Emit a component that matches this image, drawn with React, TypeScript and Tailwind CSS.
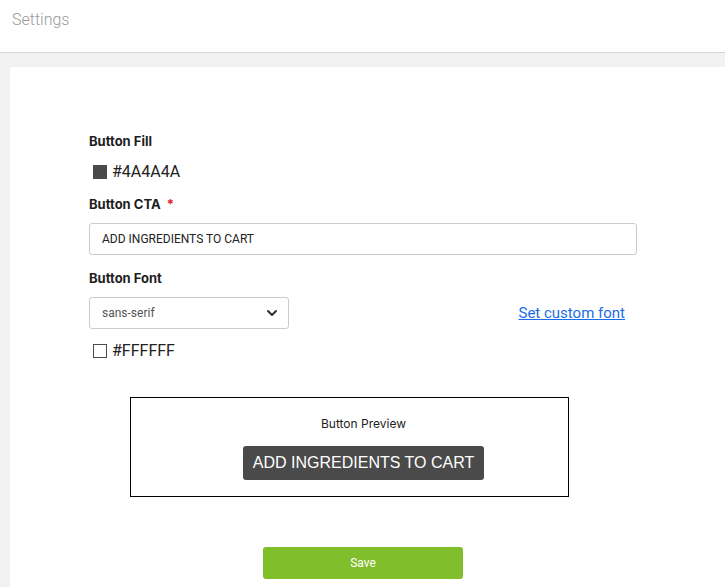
import { ChevronDown } from "lucide-react";

function Swatch({ color, label }: { color: string; label: string }) {
  return (
    <div className="flex h-5 items-center gap-[5px] pl-1">
      <span
        className="h-[14px] w-[14px] border border-[#4a4a4a]"
        style={{ backgroundColor: color }}
      />
      <span className="text-[16px] text-[#222]">{label}</span>
    </div>
  );
}

function Label({ children, className = "" }: { children: React.ReactNode; className?: string }) {
  return (
    <p className={`font-['Inter',sans-serif] text-[13px] font-bold leading-4 text-[#1e1e1e] ${className}`}>
      {children}
    </p>
  );
}

export default function App() {
  return (
    <div className="min-h-[587px] bg-[#f2f2f2] font-['Roboto',sans-serif]">
      <header className="h-[53px] border-b border-[#d6d6d6] bg-white pl-3 pt-[10px]">
        <h1 className="text-[16px] font-light leading-5 text-[#9a9a9a]">Settings</h1>
      </header>

      <div className="pl-[10px] pt-[14px]">
        <div className="min-h-[520px] rounded-tl-[3px] bg-white pb-4 pl-[79px] pr-[88px] pt-[66px]">
          <div className="w-[548px]">
            <Label>Button Fill</Label>
            <div className="mt-[13px]">
              <Swatch color="#4A4A4A" label="#4A4A4A" />
            </div>

            <Label className="mt-[14px]">
              Button CTA <span className="ml-[3px] text-[#e5202e]">*</span>
            </Label>
            <input
              readOnly
              value="ADD INGREDIENTS TO CART"
              className="mt-[11px] block h-8 w-full rounded-[3px] border border-[#c9ccd1] px-3 text-[12px] text-[#222] outline-none"
            />

            <Label className="mt-[15px]">Button Font</Label>
            <div className="mt-[11px] flex items-center justify-between pr-[12px]">
              <div className="flex h-8 w-[200px] items-center justify-between rounded-[3px] border border-[#c9ccd1] pl-3 pr-[8px]">
                <span className="text-[12px] text-[#555]">sans-serif</span>
                <ChevronDown className="h-[16px] w-[16px] text-[#333]" strokeWidth={3} />
              </div>
              <a href="#" className="text-[15px] text-[#1c6ce8] underline">
                Set custom font
              </a>
            </div>
            <div className="mt-3">
              <Swatch color="#FFFFFF" label="#FFFFFF" />
            </div>

            <div className="ml-[41px] mt-9 flex h-[100px] w-[439px] flex-col items-center border border-black pl-[28px] pt-[18px]">
              <p className="font-['Inter',sans-serif] text-[12px] leading-4 text-[#222]">Button Preview</p>
              <button className="mt-[14px] flex h-[34px] items-center rounded-[3px] bg-[#4a4a4a] px-[10px] font-['Liberation_Sans',sans-serif] text-[16px] text-white">
                ADD INGREDIENTS TO CART
              </button>
            </div>

            <div className="mt-[50px] flex justify-center">
              <button className="h-8 w-[200px] rounded-[3px] bg-[#80bf2b] text-[12px] text-white">
                Save
              </button>
            </div>
          </div>
        </div>
      </div>
    </div>
  );
}
